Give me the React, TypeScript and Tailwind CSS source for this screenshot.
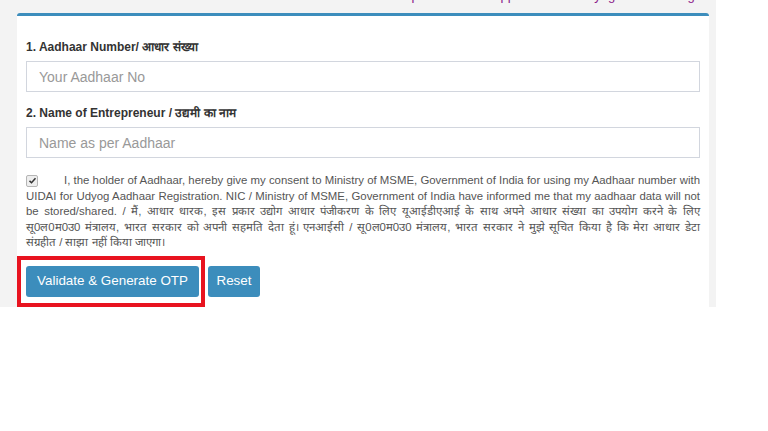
const lines = [
  "UIDAI for Udyog Aadhaar Registration. NIC / Ministry of MSME, Government of India have informed me that my aadhaar data will not",
  "be stored/shared. / मैं, आधार धारक, इस प्रकार उद्योग आधार पंजीकरण के लिए यूआईडीएआई के साथ अपने आधार संख्या का उपयोग करने के लिए",
  "सू0ल0म0उ0 मंत्रालय, भारत सरकार को अपनी सहमति देता हूं। एनआईसी / सू0ल0म0उ0 मंत्रालय, भारत सरकार ने मुझे सूचित किया है कि मेरा आधार डेटा",
];

function Field({ label, placeholder }: { label: string; placeholder: string }) {
  return (
    <div>
      <label className="block text-[12px] font-bold leading-[17px] text-[#333] mb-[5px]">{label}</label>
      <input
        type="text"
        placeholder={placeholder}
        className="block w-full h-[31px] border border-[#d2d6de] px-[12px] text-[14px] text-[#555] placeholder:text-[#999] outline-none"
      />
    </div>
  );
}

export default function App() {
  return (
    <div className="relative w-[768px] h-[431px] bg-white font-['Liberation_Sans',Arial,sans-serif]">
      <div className="w-[716px] h-[307px] bg-[#f3f3f3] pl-[17px] pr-[7px] flex flex-col overflow-hidden">
        {/* heading, only its descenders show above the box */}
        <div className="h-[13px] overflow-hidden shrink-0">
          <div className="-mt-[12px] pl-[375px] whitespace-nowrap text-[13px] leading-[16px] text-[#8b1a89]">
            Step 1 : Aadhaar Application for Udyog Aadhaar Registration
          </div>
        </div>
        <div className="flex-1 bg-white border-t-[3px] border-[#3c8dbc] rounded-t-[3px] px-[9px] pt-[23px]">
          <Field label="1. Aadhaar Number/ आधार संख्या" placeholder="Your Aadhaar No" />
          <div className="mt-[13px]">
            <Field label="2. Name of Entrepreneur / उद्यमी का नाम" placeholder="Name as per Aadhaar" />
          </div>

          <div className="mt-[15px] text-[11.4px] leading-[15.5px] text-[#555] text-justify">
            <div className="flex items-center [text-align-last:justify]">
              <span className="mr-[26px] shrink-0 flex h-[12px] w-[12px] items-center justify-center rounded-[2px] border border-[#b5b5b5] bg-[#eee]">
                <svg viewBox="0 0 12 12" className="h-[9px] w-[9px]">
                  <path d="M2 6.5 L4.7 9 L10 3" fill="none" stroke="#333" strokeWidth="2" />
                </svg>
              </span>
              <span className="flex-1">
                I, the holder of Aadhaar, hereby give my consent to Ministry of MSME, Government of India for using my Aadhaar number with
              </span>
            </div>
            {lines.map((l) => (
              <div key={l} className="[text-align-last:justify]">
                {l}
              </div>
            ))}
            <div>संग्रहीत / साझा नहीं किया जाएगा।</div>
          </div>

          <div className="mt-[15px] flex gap-[9px]">
            <button className="h-[31px] w-[173px] rounded-[3px] bg-[#3c8dbc] text-[13.4px] text-white">
              Validate &amp; Generate OTP
            </button>
            <button className="h-[31px] w-[52px] rounded-[3px] bg-[#3c8dbc] text-[13.4px] text-white">Reset</button>
          </div>
        </div>
      </div>
      {/* red highlight annotation */}
      <div className="absolute left-[17px] top-[256px] h-[51px] w-[188px] border-[4px] border-[#e8131f]" />
    </div>
  );
}
